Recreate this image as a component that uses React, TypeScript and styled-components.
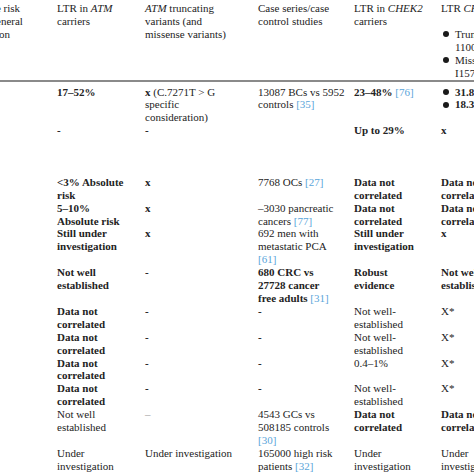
import React from "react"
import styled, { createGlobalStyle } from "styled-components"

const GlobalStyle = createGlobalStyle`
    html, body {
        margin: 0;
        padding: 0;
        width: 474px;
        height: 474px;
        overflow: hidden;
        background: #fff;
    }
    body {
        font-family: "Liberation Serif", "Times New Roman", serif;
        font-size: 11px;
        line-height: 12.9px;
        color: #232323;
    }
`

const COLS = "94px 88px 113px 96px 87px 220px"

const Table = styled.div`
    margin-left: -37px;
    width: 700px;
`

const HeadRow = styled.div`
    display: grid;
    grid-template-columns: ${COLS};
    box-sizing: border-box;
    height: 82px;
    padding-top: 1.5px;
    line-height: 13px;
    border-bottom: 2px solid #8a8a8a;
`

const Row = styled.div<{ $lines: number; $first?: boolean }>`
    display: grid;
    grid-template-columns: ${COLS};
    min-height: ${(p) => p.$lines * 12.9}px;
    padding-top: ${(p) => (p.$first ? "3.5px" : "0")};
`

const Cell = styled.div`
    white-space: nowrap;
`

const B = styled.b`
    font-weight: 700;
`

const Ref = styled.span`
    color: #5aa5da;
`

const Faint = styled.span`
    color: #9a9a9a;
`

const List = styled.div<{ $gap?: boolean }>`
    display: flex;
    flex-direction: column;
    margin-top: ${(p) => (p.$gap ? "13px" : "0")};
`

const Item = styled.div`
    display: flex;
    align-items: flex-start;
`

const Dot = styled.span`
    flex: none;
    width: 6px;
    height: 6px;
    border-radius: 50%;
    background: #1a1a1a;
    margin: 3.5px 6px 0 2px;
`

type RowData = { lines: number; cells: React.ReactNode[] }

const br = <br />

const rows: RowData[] = [
    {
        lines: 3,
        cells: [
            "",
            <B>17–52%</B>,
            <><B>x</B> (C.7271T &gt; G{br}specific{br}consideration)</>,
            <>13087 BCs vs 5952{br}controls <Ref>[35]</Ref></>,
            <><B>23–48%</B> <Ref>[76]</Ref></>,
            <List>
                <Item><Dot /><B>31.8% (1100delC)</B></Item>
                <Item><Dot /><B>18.3% (I157T)</B></Item>
            </List>,
        ],
    },
    { lines: 4, cells: ["", <B>-</B>, <B>-</B>, "", <B>Up to 29%</B>, <B>x</B>] },
    {
        lines: 2,
        cells: [
            "",
            <B>&lt;3% Absolute{br}risk</B>,
            <B>x</B>,
            <>7768 OCs <Ref>[27]</Ref></>,
            <B>Data not{br}correlated</B>,
            <B>Data not{br}correlated</B>,
        ],
    },
    {
        lines: 2,
        cells: [
            "",
            <B>5–10%{br}Absolute risk</B>,
            <B>x</B>,
            <>–3030 pancreatic{br}cancers <Ref>[77]</Ref></>,
            <B>Data not{br}correlated</B>,
            <B>Data not{br}correlated</B>,
        ],
    },
    {
        lines: 3,
        cells: [
            "",
            <B>Still under{br}investigation</B>,
            <B>x</B>,
            <>692 men with{br}metastatic PCA{br}<Ref>[61]</Ref></>,
            <B>Still under{br}investigation</B>,
            <B>x</B>,
        ],
    },
    {
        lines: 3,
        cells: [
            "",
            <B>Not well{br}established</B>,
            <B>-</B>,
            <><B>680 CRC vs{br}27728 cancer{br}free adults</B> <Ref>[31]</Ref></>,
            <B>Robust{br}evidence</B>,
            <B>Not well{br}established</B>,
        ],
    },
    {
        lines: 2,
        cells: ["", <B>Data not{br}correlated</B>, <B>-</B>, <B>-</B>, <>Not well-{br}established</>, "X*"],
    },
    {
        lines: 2,
        cells: ["", <B>Data not{br}correlated</B>, <B>-</B>, <B>-</B>, <>Not well-{br}established</>, "X*"],
    },
    {
        lines: 2,
        cells: ["", <B>Data not{br}correlated</B>, <B>-</B>, <B>-</B>, "0.4–1%", "X*"],
    },
    {
        lines: 2,
        cells: ["", <B>Data not{br}correlated</B>, <B>-</B>, <B>-</B>, <>Not well-{br}established</>, "X*"],
    },
    {
        lines: 3,
        cells: [
            "",
            <>Not well{br}established</>,
            <Faint>–</Faint>,
            <>4543 GCs vs{br}508185 controls{br}<Ref>[30]</Ref></>,
            <B>Data not{br}correlated</B>,
            <B>Data not{br}correlated</B>,
        ],
    },
    {
        lines: 2,
        cells: [
            "",
            <>Under{br}investigation</>,
            "Under investigation",
            <>165000 high risk{br}patients <Ref>[32]</Ref></>,
            <>Under{br}investigation</>,
            <>Under{br}investigation</>,
        ],
    },
]

export default function App() {
    return (
        <>
            <GlobalStyle />
            <Table>
                <HeadRow>
                    <Cell>Lifetime risk{br}in the general{br}population</Cell>
                    <Cell>LTR in <i>ATM</i>{br}carriers</Cell>
                    <Cell><i>ATM</i> truncating{br}variants (and{br}missense variants)</Cell>
                    <Cell>Case series/case{br}control studies</Cell>
                    <Cell>LTR in <i>CHEK2</i>{br}carriers</Cell>
                    <Cell>
                        LTR <i>CHEK2</i> specific variants
                        <List $gap>
                            <Item><Dot /><span>Truncating variants:{br}1100delC</span></Item>
                            <Item><Dot /><span>Missense variants:{br}I157T</span></Item>
                        </List>
                    </Cell>
                </HeadRow>
                {rows.map((r, i) => (
                    <Row key={i} $lines={r.lines} $first={i === 0}>
                        {r.cells.map((c, k) => (
                            <Cell key={k}>{c}</Cell>
                        ))}
                    </Row>
                ))}
            </Table>
        </>
    )
}
